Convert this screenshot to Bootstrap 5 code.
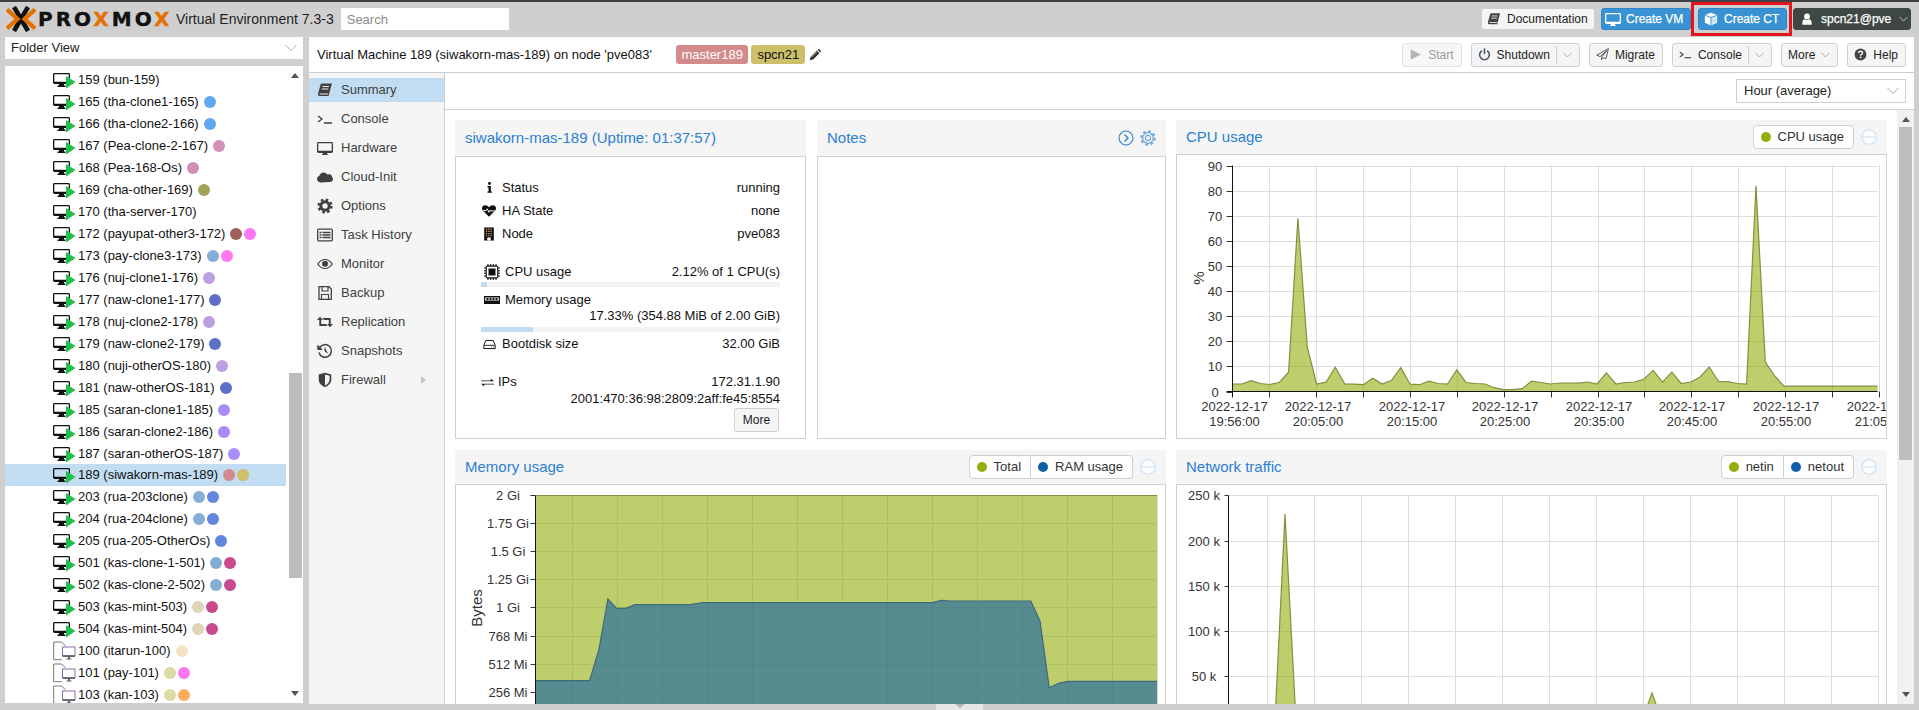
<!DOCTYPE html>
<html lang="en">
<head>
    <meta charset="UTF-8">
    <meta name="viewport" content="width=device-width, initial-scale=1.0">
    <title>pve083 - Proxmox Virtual Environment</title>
    <link href="https://cdn.jsdelivr.net/npm/bootstrap@5.3.0/dist/css/bootstrap.min.css" rel="stylesheet">
    <style>
        html, body { height: 100%; }
        body {
            background-color: #cfcfcf;
            font-family: "Liberation Sans", Arial, sans-serif;
            font-size: 13px;
            color: #111;
            overflow: hidden;
        }
        svg.ico { width: 16px; height: 16px; flex: none; display: block; }

        /* top bar */
        .topbar { height: 36px; border-top: 2px solid #3d4147; padding-left: 6px; padding-right: 8px; }
        .logo-mark { width: 30px; height: 26px; flex: none; }
        .logo-word {
            font-family: "DejaVu Sans", sans-serif;
            font-weight: 700;
            font-size: 20px;
            letter-spacing: 3px;
            color: #111;
            margin-left: 2px;
            width: 138px;
            white-space: nowrap;
            -webkit-text-stroke: .4px #111;
        }
        .logo-word b { color: #e57000; -webkit-text-stroke: .4px #e57000; font-weight: 700; }
        .version { font-size: 14px; color: #222; white-space: nowrap; }
        .search { width: 168px; height: 22px; margin-left: 7px; border: 0; border-radius: 0; padding: 0 6px; font-size: 13px; }
        .search::placeholder { color: #8a8a8a; }

        .btn-x {
            display: flex;
            align-items: center;
            height: 24px;
            padding: 0 7px 0 6px;
            gap: 6px;
            font-size: 12px;
            line-height: 1;
            color: #222;
            background: #f5f5f5;
            border: 1px solid #cfcfcf;
            border-radius: 3px;
            white-space: nowrap;
        }
        .btn-x .sep { width: 1px; height: 18px; background: #cfcfcf; }
        .btn-x svg.chev { width: 9px; height: 6px; flex: none; }
        .btn-x.is-off { color: #9a9a9a; border-color: #e2e2e2; background: #f7f7f7; }
        .btn-top { height: 22px; }
        .btn-blue { background: #3892d4; border-color: #2f86c7; color: #fff; -webkit-text-stroke: .25px #fff; }
        .btn-dark-pve { background: #3e4744; border-color: #3e4744; color: #fff; -webkit-text-stroke: .25px #fff; }
        .btn-docs { width: 114px; padding-left: 5px; margin-right: 6px; }
        .btn-vm { width: 90px; padding-left: 3px; gap: 5px; margin-right: 7px; }
        .btn-ct { width: 89px; padding-left: 5px; margin-right: 6px; position: relative; }
        .btn-ct::after {
            content: "";
            position: absolute;
            top: -7px;
            bottom: -7px;
            left: -8px;
            right: -6px;
            border: 3px solid #e2151f;
            pointer-events: none;
        }
        .btn-user { width: 118px; padding-left: 7px; padding-right: 4px; gap: 8px; }

        /* left column */
        .workspace { height: 668px; padding-top: 1px; }
        .left-col { width: 298px; margin-left: 5px; margin-right: 6px; flex: none; }
        .form-select.view-select, .form-select.range-select {
            background-image: url("data:image/svg+xml,%3csvg xmlns='http://www.w3.org/2000/svg' viewBox='0 0 12 8'%3e%3cpath fill='none' stroke='%23aaa' stroke-width='1' d='M.5 1L6 6.500 11.500 1'/%3e%3c/svg%3e");
        }
        .view-select {
            height: 22px;
            padding: 0 0 0 6px;
            border: 0;
            border-radius: 0;
            font-size: 13px;
            background-size: 12px 8px;
            background-position: right 6px center;
            color: #222;
        }
        .tree { height: 637px; margin-top: 7px; background: #fff; overflow: hidden; }
        .tree-list { width: 281px; padding-top: 3px; flex: none; border-radius: 0; }
        .tree-row {
            display: flex;
            align-items: center;
            height: 22px;
            flex: none;
            padding: 0 0 0 48px;
            border: 0;
            border-radius: 0;
            font-size: 13px;
            color: #111;
            background: transparent;
            white-space: nowrap;
        }
        .tree-row.active { background: #c2ddf2; color: #111; margin-top: 0; }
        .tree-row svg { width: 23px; height: 20px; flex: none; margin-right: 2px; }
        .tag-dot { width: 12px; height: 12px; border-radius: 50%; flex: none; margin-left: 2px; }
        .tag-dot.first { margin-left: 5px; }
        .vbar { width: 16px; margin-left: 1px; flex: none; background: #fff; align-items: center; }
        .vbar .up { width: 0; height: 0; border: 4px solid transparent; border-top: 0; border-bottom: 5px solid #555; margin-top: 7px; }
        .vbar .dn { width: 0; height: 0; border: 4px solid transparent; border-bottom: 0; border-top: 5px solid #555; margin-top: auto; margin-bottom: 7px; }
        .vbar .thumb { width: 13px; background: #bdbdbd; }
        .tree .thumb { margin-top: 295px; height: 205px; margin-left: 1px; }

        /* right column */
        .right-col { width: 1605px; flex: none; background: #fff; }
        .title-bar { height: 36px; border-bottom: 1px solid #cfcfcf; padding: 0 8px; flex: none; }
        .tag-pill {
            font-size: 13px;
            font-weight: 400;
            height: 19px;
            line-height: 19px;
            padding: 0 5.5px;
            border-radius: 3px;
        }
        .tag-pill.wide { padding: 0 6px; margin-left: 3px; }
        .action-row { gap: 9px; }
        .tabs { width: 136px; flex: none; background: #f5f5f5; border-right: 1px solid #cfcfcf; padding-top: 5px; }
        .tab-link {
            display: flex;
            align-items: center;
            height: 24px;
            margin-bottom: 5px;
            padding: 0 0 0 8px;
            gap: 8px;
            font-size: 13px;
            color: #404040;
        }
        .tab-link.active { background: #c2ddf2; color: #404040; }
        .tab-link .more { margin-left: auto; margin-right: 18px; width: 0; height: 0; border: 4px solid transparent; border-right: 0; border-left: 5px solid #c4c4c4; }
        .range-bar { height: 37px; border-bottom: 1px solid #cfcfcf; padding-right: 8px; flex: none; }
        .range-select {
            width: 170px;
            height: 24px;
            padding: 0 0 0 7px;
            border: 1px solid #cfcfcf;
            border-radius: 0;
            font-size: 13px;
            background-size: 12px 8px;
            background-position: right 6px center;
            color: #222;
        }
        .scroll-host { height: 594px; overflow: hidden; }
        .scroll-area { width: 1452px; flex: none; padding: 10px 10px 0; overflow: hidden; }
        .main-bar { width: 17px; background: #f1f1f1; margin-left: 0; padding-top: 0; }
        .main-bar .thumb { margin-top: 5px; height: 333px; }
        .row-top { height: 319px; margin-bottom: 11px; flex: none; }
        .panel-row { gap: 10px; }
        .half { width: 711px; flex: none; }

        .panel { border: 0; border-radius: 0; background: transparent; }
        .panel > .card-header {
            height: 34px;
            flex: none;
            padding: 0 10px;
            background: #f5f5f5;
            border: 0;
            border-radius: 0;
            font-size: 15px;
            color: #2a80d2;
        }
        .panel.tall > .card-header { height: 36px; }
        .panel > .card-body { padding: 0; border: 1px solid #d0d0d0; background: #fff; overflow: hidden; flex: 1 1 auto; min-height: 0; }
        .panel.tall > .card-body { padding: 19px 25px 0; }
        .legend-btn {
            display: flex;
            align-items: center;
            height: 24px;
            padding: 0 9px 0 7px;
            gap: 7px;
            background: #fff;
            border: 1px solid #cfcfcf;
            color: #333;
            font-size: 13px;
        }
        .legend-btn i { width: 10px; height: 10px; border-radius: 50%; display: block; }
        .tool-circle { width: 16px; height: 16px; margin-left: 7px; flex: none; }

        /* status list */
        .st-row { display: flex; align-items: center; justify-content: space-between; }
        .st-name { display: flex; align-items: center; }
        .st-h23 { height: 23px; }
        .st-bar { height: 5px; background: #f3f3f3; border-radius: 0; }
        .st-bar .progress-bar { background: #c2ddf2; }
        .gap-tiny { margin-top: 4px; }
        .ico-slot { width: 21px; display: flex; justify-content: center; padding-right: 5px; flex: none; }
        .ico-wide { width: 24px; padding-left: 3px; padding-right: 5px; display: flex; flex: none; }
        .btn-more { height: 24px; width: 45px; justify-content: center; padding: 0; margin-top: 2px; margin-right: 1px; }

        .footer-strip { height: 6px; flex: none; }
        .split-handle { width: 47px; height: 6px; background: #e6e6e6; display: flex; justify-content: center; }
        .split-handle span { width: 0; height: 0; border: 5px solid transparent; border-bottom: 0; border-top: 4px solid #b4b4b4; }
        svg.chart { display: block; font-family: "Liberation Sans", Arial, sans-serif; font-size: 13px; }
    </style>
</head>
<body class="d-flex flex-column">

    <svg width="0" height="0" class="position-absolute">
        <defs>
            <symbol id="i-book" viewBox="0 0 16 16"><path d="M5 1.5h10l-.6 2-2.8 10.500H2.600C1.400 14 .7 13 1 11.700L3.600 2.600C3.800 1.900 4.300 1.500 5 1.500z" fill="currentColor"/><path d="M5.500 4.500h6.500M4.800 7h6.500M2.700 12h8.500" stroke="#fff" stroke-width=".9" fill="none"/></symbol>
            <symbol id="i-term" viewBox="0 0 16 16"><path d="M1 5l4 3-4 3M7 12h8" stroke="currentColor" stroke-width="1.300" fill="none"/></symbol>
            <symbol id="i-desktop" viewBox="0 0 16 16"><path fill-rule="evenodd" d="M1.500 2h13c.8 0 1.500.6 1.500 1.400v8.200c0 .8-.7 1.400-1.500 1.400H10c0 1 .5 1.300 1 1.500v.5H5v-.5c.5-.2 1-.5 1-1.500H1.500C.7 13 0 12.400 0 11.600V3.400C0 2.600.7 2 1.500 2zM1.300 3.300v7.400h13.400V3.300z" fill="currentColor"/></symbol>
            <symbol id="i-cloud" viewBox="0 0 16 16"><path d="M3.800 13.500C1.700 13.500 0 12 0 10.100c0-1.500 1-2.800 2.400-3.300C2.800 4.800 4.500 3.500 6.500 3.500c1.600 0 3 .8 3.700 2.100.5-.2 1-.3 1.500-.3 1.900 0 3.400 1.300 3.500 3 .5.400.8 1.100.8 2 0 1.500-1.400 2.700-3 2.700z" fill="currentColor"/></symbol>
            <symbol id="i-gear" viewBox="0 0 16 16"><circle cx="8" cy="8" r="4.200" fill="none" stroke="currentColor" stroke-width="3"/><circle cx="8" cy="8" r="6.300" fill="none" stroke="currentColor" stroke-width="2.600" stroke-dasharray="2.500 2.450"/></symbol>
            <symbol id="i-gear-line" viewBox="0 0 16 16"><circle cx="8" cy="8" r="2.600" fill="none" stroke="currentColor" stroke-width="1.100"/><circle cx="8" cy="8" r="5.300" fill="none" stroke="currentColor" stroke-width="1.200"/><circle cx="8" cy="8" r="6.800" fill="none" stroke="currentColor" stroke-width="2" stroke-dasharray="2.700 2.640"/></symbol>
            <symbol id="i-list" viewBox="0 0 16 16"><rect x=".7" y="2.200" width="14.600" height="11.600" rx="1.300" fill="none" stroke="currentColor" stroke-width="1.300"/><path d="M2.500 5.500h2M5.500 5.500h8M2.500 8h2M5.500 8h8M2.500 10.500h2M5.500 10.500h8" stroke="currentColor" stroke-width="1.400"/></symbol>
            <symbol id="i-eye" viewBox="0 0 16 16"><path d="M.8 8c1.900-3 4.300-4.500 7.200-4.500S13.300 5 15.200 8c-1.900 3-4.300 4.500-7.200 4.500S2.700 11 .8 8z" fill="none" stroke="currentColor" stroke-width="1.200"/><circle cx="8" cy="7.800" r="3" fill="currentColor"/></symbol>
            <symbol id="i-floppy" viewBox="0 0 16 16"><path d="M2 1.700h10l2.300 2.300v10.300H2z" fill="none" stroke="currentColor" stroke-width="1.300"/><path d="M5 2v4h6V2M4.500 14V9.500h7V14" fill="none" stroke="currentColor" stroke-width="1.200"/></symbol>
            <symbol id="i-retweet" viewBox="0 0 16 16"><path d="M0 6l3-3.200L6 6H4.200v4H9l1.600 2H3.300c-.6 0-1-.4-1-1V6zM16 10l-3 3.200L10 10h1.800V6H7L5.400 4h7.300c.6 0 1 .4 1 1v5z" fill="currentColor"/></symbol>
            <symbol id="i-history" viewBox="0 0 16 16"><path d="M2.500 5A6.300 6.300 0 1 1 2 9.500" fill="none" stroke="currentColor" stroke-width="1.500"/><path d="M.8 2.200v4.300h4.300zM8 4.500V8.300l2.600 1.600" fill="currentColor" stroke="currentColor" stroke-width=".9"/></symbol>
            <symbol id="i-shield" viewBox="0 0 16 16"><path fill-rule="evenodd" d="M8 .8l6.300 1.800v5.200c0 3.500-3 6-6.300 7.400-3.300-1.400-6.300-3.900-6.300-7.400V2.600zM8 2.500v11c2.500-1.200 4.600-3.200 4.600-5.700V3.800z" fill="currentColor"/></symbol>
            <symbol id="i-info" viewBox="0 0 16 16"><circle cx="8" cy="3" r="1.800" fill="currentColor"/><path d="M5.500 6.300h4.200v6.500h1.300v1.700H5.500v-1.700h1.300V8H5.500z" fill="currentColor"/></symbol>
            <symbol id="i-heart" viewBox="0 0 16 16"><path d="M8 14.500L1.700 8.200C.5 7 0 6 0 4.800 0 2.700 1.500 1.500 3.800 1.500c1.600 0 3 .9 4.200 2.300C9.200 2.400 10.600 1.500 12.200 1.500 14.500 1.500 16 2.700 16 4.800c0 1.200-.5 2.200-1.700 3.400z" fill="currentColor"/><path d="M1.500 7.500h3.300l1.200-2 2 4 1.300-2.500.8.900h4.400" fill="none" stroke="#fff" stroke-width="1.100"/></symbol>
            <symbol id="i-node" viewBox="0 0 16 16"><rect x="2.500" y=".5" width="11" height="15" fill="currentColor"/><path d="M4.500 2.500h7M4.500 5h7M4.500 7.500h7M4.500 10h7" stroke="#c49a63" stroke-width="1.300" stroke-dasharray="1.500 1"/><rect x="6" y="12" width="4" height="3.500" fill="#fff"/></symbol>
            <symbol id="i-cpu" viewBox="0 0 16 16"><rect x="2.200" y="2.200" width="11.600" height="11.600" rx="1" fill="none" stroke="currentColor" stroke-width="1.200"/><rect x="4.500" y="4.500" width="7" height="7" fill="currentColor"/><path d="M4 0v2M6.700 0v2M9.300 0v2M12 0v2M4 14v2M6.700 14v2M9.300 14v2M12 14v2M0 4h2M0 6.700h2M0 9.300h2M0 12h2M14 4h2M14 6.700h2M14 9.300h2M14 12h2" stroke="currentColor" stroke-width="1.100"/></symbol>
            <symbol id="i-mem" viewBox="0 0 16 16"><path fill-rule="evenodd" d="M0 4h16v8H0zM1.200 5.500v3h13.600v-3z" fill="currentColor"/><path d="M2.500 6h2v2h-2zM5.500 6h2v2h-2zM8.500 6h2v2h-2zM11.500 6h2v2h-2z" fill="currentColor"/></symbol>
            <symbol id="i-hdd" viewBox="0 0 16 16"><path d="M3.500 3h9l2.500 6v4H1V9z" fill="none" stroke="currentColor" stroke-width="1.200"/><path d="M1.500 9h13" stroke="currentColor" stroke-width="1.100"/><path d="M10 11h1.200M12.500 11h1" stroke="#b03060" stroke-width="1"/></symbol>
            <symbol id="i-swap" viewBox="0 0 16 16"><path d="M0 5.500h12V3l4 3.500h-1.500L0 6.500zM16 10.500H4V13L0 9.500h1.500L16 9.500z" fill="currentColor"/></symbol>
            <symbol id="i-power" viewBox="0 0 16 16"><path d="M4.800 3.400a6 6 0 1 0 6.400 0" fill="none" stroke="currentColor" stroke-width="2"/><path d="M8 .5v7" stroke="currentColor" stroke-width="2"/></symbol>
            <symbol id="i-plane" viewBox="0 0 16 16"><path d="M15.300 .8L.9 8.800l4.200 1.700 8-7.200-6.300 8.100v3l2.200-2.500 3.200 1.400z" fill="none" stroke="currentColor" stroke-width="1.200" stroke-linejoin="round"/></symbol>
            <symbol id="i-help" viewBox="0 0 16 16"><circle cx="8" cy="8" r="7.300" fill="currentColor"/><path d="M5.600 6.200C5.700 4.800 6.700 4 8 4s2.500.8 2.500 2.100c0 1.800-2.400 1.700-2.400 3.400" fill="none" stroke="#f5f5f5" stroke-width="1.700"/><rect x="7.100" y="10.600" width="2" height="1.900" fill="#f5f5f5"/></symbol>
            <symbol id="i-play" viewBox="0 0 16 16"><path d="M2 1.500L14.500 8 2 14.500z" fill="currentColor"/></symbol>
            <symbol id="i-user" viewBox="0 0 16 16"><circle cx="8" cy="4.500" r="3.800" fill="currentColor"/><path d="M1.800 15.500v-3c0-2.600 1.600-4 3.300-4.200 1.700 1.400 4.100 1.400 5.800 0 1.700.2 3.300 1.600 3.300 4.200v3z" fill="currentColor"/></symbol>
            <symbol id="i-cube" viewBox="0 0 16 16"><path d="M8 .8l7 2.700v8.800l-7 3-7-3V3.500z" fill="#fff"/><path d="M1.500 3.800L8 6.300l6.500-2.500M8 6.300v9" fill="none" stroke="#3892d4" stroke-width="1.100"/><path d="M8.500 7l5.800-2.300v7.100l-5.800 2.500z" fill="#3892d4" opacity=".25"/></symbol>
            <symbol id="i-pencil" viewBox="0 0 16 16"><path d="M1 15l1-4.500 8.500-8.500 3.500 3.500L5.500 14z" fill="currentColor"/><path d="M11.500 1l1-.7c.5-.3 1-.3 1.400.1l1.700 1.700c.4.4.4 1 0 1.400l-.7 1z" fill="currentColor"/><path d="M3 11l7.500-7.500" stroke="#fff" stroke-width=".8"/></symbol>
            <symbol id="i-vm" viewBox="0 0 23 20"><path fill-rule="evenodd" d="M1.500 3h14c.8 0 1.500.6 1.500 1.400v8.200c0 .8-.7 1.400-1.500 1.400H11v1.500h1.500V17h-8v-1.500H6V14H1.500C.7 14 0 13.400 0 12.600V4.400C0 3.600.7 3 1.500 3zM1.300 4.300v7.500h14.400V4.300z" fill="#111"/><path d="M13 6L22.500 12 13 18.500z" fill="#21bf4b"/></symbol>
            <symbol id="i-tpl" viewBox="0 0 23 20"><path d="M.7 18.700V1h8l3.800 4" fill="none" stroke="#777" stroke-width="1"/><path d="M.7 18.700h8" stroke="#777" stroke-width="1"/><rect x="9.500" y="6" width="12.500" height="8.500" fill="#fff" stroke="#8a6fb0" stroke-width="1"/><path d="M9.500 14.500H22V16H17v1.500h1.500v1h-5v-1H15V16H9.500z" fill="#666"/></symbol>
            <symbol id="i-chev" viewBox="0 0 9 6"><path d="M.5.8L4.500 5 8.500.8" fill="none" stroke="currentColor" stroke-width="1"/></symbol>
            <symbol id="i-minus" viewBox="0 0 16 16"><circle cx="8" cy="8" r="7.200" fill="#fbfdff" stroke="#c9e0f2" stroke-width="1.100"/><path d="M1.500 8h13" stroke="#c9e0f2" stroke-width="1"/></symbol>
        </defs>
    </svg>

    <header class="topbar d-flex align-items-center flex-none">
        <svg class="logo-mark" viewBox="0 0 30 26">
            <path d="M8 1l14 24M22 1L8 25" stroke="#111" stroke-width="4.600" fill="none"/>
            <path d="M1 3.500L11.500 13 1 22.500M29 3.500L18.500 13 29 22.500" stroke="#e57000" stroke-width="4.200" fill="none"/>
        </svg>
        <span class="logo-word">PRO<b>X</b>MO<b>X</b></span>
        <span class="version">Virtual Environment 7.3-3</span>
        <input class="form-control search" type="text" placeholder="Search">
        <div class="ms-auto d-flex align-items-center">
            <button class="btn-x btn-top btn-docs" type="button"><svg class="ico" style="width:14px;height:14px;color:#444"><use href="#i-book"/></svg>Documentation</button>
            <button class="btn-x btn-top btn-blue btn-vm" type="button"><svg class="ico"><use href="#i-desktop"/></svg>Create VM</button>
            <button class="btn-x btn-top btn-blue btn-ct" type="button"><svg class="ico" style="width:14px;height:14px"><use href="#i-cube"/></svg>Create CT</button>
            <button class="btn-x btn-top btn-dark-pve btn-user" type="button"><svg class="ico" style="width:12px;height:12px"><use href="#i-user"/></svg>spcn21@pve<svg class="chev ms-auto" style="color:#bbb"><use href="#i-chev"/></svg></button>
        </div>
    </header>

    <div class="workspace d-flex">
        <aside class="left-col d-flex flex-column">
            <select class="form-select view-select"><option>Folder View</option></select>
            <div class="tree d-flex">
                <div class="list-group list-group-flush tree-list" id="treeList"></div>
                <div class="vbar d-flex flex-column"><div class="up"></div><div class="thumb"></div><div class="dn"></div></div>
            </div>
        </aside>

        <main class="right-col d-flex flex-column">
            <div class="title-bar d-flex align-items-center">
                <span>Virtual Machine 189 (siwakorn-mas-189) on node 'pve083'</span>
                <span class="badge tag-pill ms-4" style="background:#d28a8a;color:#fff">master189</span>
                <span class="badge tag-pill wide" style="background:#cdc06a;color:#111">spcn21</span>
                <svg class="ico ms-1" style="width:12px;height:12px;color:#333"><use href="#i-pencil"/></svg>
                <div class="ms-auto d-flex action-row" id="actions"></div>
            </div>
            <div class="d-flex flex-grow-1">
                <nav class="tabs nav flex-column flex-nowrap" id="tabs"></nav>
                <section class="flex-grow-1 d-flex flex-column">
                    <div class="range-bar d-flex align-items-center justify-content-end">
                        <select class="form-select range-select"><option>Hour (average)</option></select>
                    </div>
                    <div class="scroll-host d-flex">
                        <div class="scroll-area">
                            <div class="row-top d-flex panel-row">
                                <div class="half d-flex" style="gap:11px">
                                    <div class="card panel tall" style="width:351px">
                                        <div class="card-header d-flex align-items-center">siwakorn-mas-189 (Uptime: 01:37:57)</div>
                                        <div class="card-body">
                                            <div class="st-row st-h23"><span class="st-name"><span class="ico-slot"><svg class="ico" style="width:13px;height:13px"><use href="#i-info"/></svg></span>Status</span><span>running</span></div>
                                            <div class="st-row st-h23"><span class="st-name"><span class="ico-slot"><svg class="ico" style="width:14px;height:14px"><use href="#i-heart"/></svg></span>HA State</span><span>none</span></div>
                                            <div class="st-row st-h23"><span class="st-name"><span class="ico-slot"><svg class="ico" style="width:14px;height:14px"><use href="#i-node"/></svg></span>Node</span><span>pve083</span></div>

                                            <div class="st-row" style="height:21px;margin-top:16px"><span class="st-name"><span class="ico-wide"><svg class="ico"><use href="#i-cpu"/></svg></span>CPU usage</span><span>2.12% of 1 CPU(s)</span></div>
                                            <div class="progress st-bar"><div class="progress-bar" style="width:2.12%"></div></div>

                                            <div class="st-row" style="height:18px;margin-top:4px"><span class="st-name"><span class="ico-wide"><svg class="ico"><use href="#i-mem"/></svg></span>Memory usage</span></div>
                                            <div class="st-row justify-content-end" style="height:14px"><span>17.33% (354.88 MiB of 2.00 GiB)</span></div>
                                            <div class="progress st-bar gap-tiny"><div class="progress-bar" style="width:17.33%"></div></div>

                                            <div class="st-row" style="height:20px;margin-top:2px"><span class="st-name"><span class="ico-slot"><svg class="ico" style="width:13px;height:13px"><use href="#i-hdd"/></svg></span>Bootdisk size</span><span>32.00 GiB</span></div>

                                            <div class="st-row" style="height:20px;margin-top:18px"><span class="st-name"><svg class="ico me-1" style="width:13px;height:13px"><use href="#i-swap"/></svg>IPs</span><span>172.31.1.90</span></div>
                                            <div class="st-row justify-content-end" style="height:14px"><span>2001:470:36:98:2809:2aff:fe45:8554</span></div>
                                            <div class="d-flex justify-content-end"><button class="btn-x btn-more" type="button">More</button></div>
                                        </div>
                                    </div>
                                    <div class="card panel tall" style="width:349px">
                                        <div class="card-header d-flex align-items-center">Notes
                                            <svg class="ms-auto" width="16" height="16" viewBox="0 0 16 16" style="margin-right:6px"><circle cx="8" cy="8" r="7" fill="none" stroke="#2a80d2" stroke-width="1.100"/><path d="M6.500 4.500L10 8l-3.500 3.500" fill="none" stroke="#2a80d2" stroke-width="1.400"/></svg>
                                            <svg width="16" height="16" viewBox="0 0 16 16" style="color:#6fa6d6"><use href="#i-gear-line"/></svg>
                                        </div>
                                        <div class="card-body"></div>
                                    </div>
                                </div>
                                <div class="card panel half">
                                    <div class="card-header d-flex align-items-center">CPU usage
                                        <div class="btn-group ms-auto"><span class="legend-btn rounded-1"><i style="background:#94ae0a"></i>CPU usage</span></div>
                                        <svg class="tool-circle"><use href="#i-minus"/></svg>
                                    </div>
                                    <div class="card-body" id="cpuChart"></div>
                                </div>
                            </div>
                            <div class="d-flex panel-row" style="height:290px">
                                <div class="card panel half">
                                    <div class="card-header d-flex align-items-center">Memory usage
                                        <div class="btn-group ms-auto"><span class="legend-btn rounded-start-1"><i style="background:#94ae0a"></i>Total</span><span class="legend-btn rounded-end-1 border-start-0"><i style="background:#115fa6"></i>RAM usage</span></div>
                                        <svg class="tool-circle"><use href="#i-minus"/></svg>
                                    </div>
                                    <div class="card-body" id="memChart"></div>
                                </div>
                                <div class="card panel half">
                                    <div class="card-header d-flex align-items-center">Network traffic
                                        <div class="btn-group ms-auto"><span class="legend-btn rounded-start-1"><i style="background:#94ae0a"></i>netin</span><span class="legend-btn rounded-end-1 border-start-0"><i style="background:#115fa6"></i>netout</span></div>
                                        <svg class="tool-circle"><use href="#i-minus"/></svg>
                                    </div>
                                    <div class="card-body" id="netChart"></div>
                                </div>
                            </div>
                        </div>
                        <div class="vbar main-bar d-flex flex-column"><div class="up"></div><div class="thumb"></div><div class="dn"></div></div>
                    </div>
                </section>
            </div>
        </main>
    </div>

    <div class="footer-strip d-flex justify-content-center"><div class="split-handle"><span></span></div></div>

    <script>
        // tag colours as they are set on the cluster
        const C = { thaB: '#62a8f0', pea: '#d38fb6', cha: '#a3a35c', pay: '#9e5f58', pink: '#ff77f0', lb: '#84aed4',
            nuj: '#bb9fe0', naw: '#5f6fc8', sar: '#a98cf8', mas: '#d28a8a', sp: '#cdc06a', rua: '#6087dd', kas: '#c94a8c',
            sand: '#dcd5b8', ita: '#f6e3c6', kh: '#dcdaa5', or: '#ffaa5c' };

        const guests = [
            ['159 (bun-159)', []], ['165 (tha-clone1-165)', [C.thaB]], ['166 (tha-clone2-166)', [C.thaB]],
            ['167 (Pea-clone-2-167)', [C.pea]], ['168 (Pea-168-Os)', [C.pea]], ['169 (cha-other-169)', [C.cha]],
            ['170 (tha-server-170)', []], ['172 (payupat-other3-172)', [C.pay, C.pink]], ['173 (pay-clone3-173)', [C.lb, C.pink]],
            ['176 (nuj-clone1-176)', [C.nuj]], ['177 (naw-clone1-177)', [C.naw]], ['178 (nuj-clone2-178)', [C.nuj]],
            ['179 (naw-clone2-179)', [C.naw]], ['180 (nuji-otherOS-180)', [C.nuj]], ['181 (naw-otherOS-181)', [C.naw]],
            ['185 (saran-clone1-185)', [C.sar]], ['186 (saran-clone2-186)', [C.sar]], ['187 (saran-otherOS-187)', [C.sar]],
            ['189 (siwakorn-mas-189)', [C.mas, C.sp]], ['203 (rua-203clone)', [C.lb, C.rua]], ['204 (rua-204clone)', [C.lb, C.rua]],
            ['205 (rua-205-OtherOs)', [C.rua]], ['501 (kas-clone-1-501)', [C.lb, C.kas]], ['502 (kas-clone-2-502)', [C.lb, C.kas]],
            ['503 (kas-mint-503)', [C.sand, C.kas]], ['504 (kas-mint-504)', [C.sand, C.kas]],
            ['100 (itarun-100)', [C.ita], 1], ['101 (pay-101)', [C.kh, C.pink], 1], ['103 (kan-103)', [C.kh, C.or], 1]
        ];

        document.getElementById('treeList').innerHTML = guests.map(g => {
            const dots = g[1].map((c, i) => `<span class="tag-dot ${i ? '' : 'first'}" style="background:${c}"></span>`).join('');
            const active = g[0].startsWith('189') ? ' active' : '';
            return `<div class="list-group-item tree-row${active}"><svg><use href="#${g[2] ? 'i-tpl' : 'i-vm'}"/></svg>${g[0]}${dots}</div>`;
        }).join('');

        const tabs = [['Summary', 'book'], ['Console', 'term'], ['Hardware', 'desktop'], ['Cloud-Init', 'cloud'], ['Options', 'gear'],
            ['Task History', 'list'], ['Monitor', 'eye'], ['Backup', 'floppy'], ['Replication', 'retweet'], ['Snapshots', 'history'], ['Firewall', 'shield']];
        document.getElementById('tabs').innerHTML = tabs.map((t, i) =>
            `<a class="nav-link tab-link${i ? '' : ' active'}" href="#"><svg class="ico"><use href="#i-${t[1]}"/></svg>${t[0]}${t[0] === 'Firewall' ? '<span class="more"></span>' : ''}</a>`).join('');

        const chev = '<svg class="chev" style="color:#aaa"><use href="#i-chev"/></svg>';
        const actions = [
            ['Start', 'play', 'is-off', '#b5b5b5', ''],
            ['Shutdown', 'power', '', '#4b5a6b', '<span class="sep"></span>' + chev],
            ['Migrate', 'plane', '', '#555', ''],
            ['Console', 'term', '', '#333', '<span class="sep"></span>' + chev],
            ['More', '', '', '', chev],
            ['Help', 'help', '', '#444', '']
        ];
        document.getElementById('actions').innerHTML = actions.map(a => {
            const icon = a[1] ? `<svg class="ico" style="width:13px;height:13px;color:${a[3]}"><use href="#i-${a[1]}"/></svg>` : '';
            return `<button class="btn-x ${a[2]}" type="button">${icon}${a[0]}${a[4]}</button>`;
        }).join('');

        // charts, drawn in page coordinates through the viewBox
        function hline(x1, x2, y, c) { return `<path d="M${x1} ${y}H${x2}" stroke="${c}"/>`; }
        function vline(x, y1, y2, c) { return `<path d="M${x} ${y1}V${y2}" stroke="${c}"/>`; }
        function label(x, y, s, extra) { return `<text x="${x}" y="${y}" fill="#333" text-anchor="middle" dominant-baseline="central" ${extra || ''}>${s}</text>`; }
        function area(pts, y0, fill, stroke) {
            const p = pts.map(q => q[0].toFixed(1) + ',' + q[1].toFixed(1)).join(' ');
            const first = pts[0][0].toFixed(1), last = pts[pts.length - 1][0].toFixed(1);
            return `<polygon points="${first},${y0} ${p} ${last},${y0}" fill="${fill}" fill-opacity=".6"/><polyline points="${p}" fill="none" stroke="${stroke}" stroke-width="1.200"/>`;
        }
        function svg(id, box) {
            return (inner) => {
                document.getElementById(id).innerHTML =
                    `<svg class="chart" width="${box[2]}" height="${box[3]}" viewBox="${box.join(' ')}">${inner}</svg>`;
            };
        }

        // CPU
        const cpu = [3,3,4.3,3.2,2.8,3.6,7.7,69,17.7,3,3.7,9.7,3,2.9,2.7,5.3,3,4.4,9.5,2.9,2.7,4.1,3.2,3,8.6,3.6,3.2,3,1.5,.7,.7,1.1,4.1,3.6,3,3.4,3.4,3.3,3.8,3,7.4,3,3.6,3.8,4.9,8.4,3.7,7.7,3.2,3.8,5.7,9.8,4,3.9,3.2,3,82,11.7,6.2,2.1];
        while (cpu.length < 70) cpu.push(2.1);
        const cx0 = 1232.5, cx1 = 1877.5, cy0 = 391.5, cyTop = 165.5;
        let g = '';
        for (let i = 1; i <= 14; i++) {
            const x = Math.round(cx0 + 36.9 + (i - 1) * 46.88) + .5;
            g += vline(x, cyTop, cy0, '#ddd') + vline(x, cy0, cy0 + 6, '#333');
        }
        for (let v = 0; v <= 90; v += 10) {
            const y = Math.round(cy0 - v * 2.51) + .5;
            if (v) g += hline(cx0, cx1, y, '#ddd');
            g += hline(cx0 - 6, cx0, y, '#333') + label(1215, y, v);
        }
        g += area(cpu.map((v, i) => [cx0 + i * (cx1 - cx0) / 69, cy0 - v * 2.51]), cy0, '#94ae0a', '#7d9240');
        g += vline(cx0, cyTop, cy0 + 6, '#111') + hline(cx0 - 6, cx1, cy0, '#111');
        [[1234.5, '19:56:00'], [1318, '20:05:00'], [1412, '20:15:00'], [1505, '20:25:00'], [1599, '20:35:00'], [1692, '20:45:00'], [1786, '20:55:00'], [1880, '21:05:00']].forEach(t => {
            g += label(t[0], 406, '2022-12-17') + label(t[0], 421, t[1]);
        });
        g += label(1198, 278, '%', 'font-size="15" transform="rotate(-90 1198 278)"');
        svg('cpuChart', [1177, 155, 709, 283])(g);

        // memory, clipped at the bottom of the scroller
        const mx = z => 450 + z / 2.178, my = z => 440 + z / 3;
        const ram = [[186,722],[304,722],[324,630],[344,477],[363,505],[383,505],[403,494],[522,494],[552,488],[1050,488],[1070,481],[1090,483],[1265,483],[1285,543],[1305,743],[1325,730],[1345,724],[1540,724]];
        const mTop = 495.5, mBot = 720, mL = 535.5, mR = 1157;
        g = '';
        for (let i = 0; i < 14; i++) { const x = Math.round(571.7 + i * 45) + .5; g += vline(x, mTop, mBot, '#ddd'); }
        ['2 Gi', '1.75 Gi', '1.5 Gi', '1.25 Gi', '1 Gi', '768 Mi', '512 Mi', '256 Mi'].forEach((s, i) => {
            const y = Math.round(495 + i * 28.1) + .5;
            g += hline(mL, mR, y, '#ddd') + hline(mL - 5, mL, y, '#333') + label(508, y, s);
        });
        g += area([[mL, mTop], [mR, mTop]], mBot, '#94ae0a', '#7d9240');
        g += area(ram.map(p => [mx(p[0]), my(p[1])]), mBot, '#115fa6', '#3d6b7c');
        g += vline(mL, mTop, mBot, '#111');
        g += label(476, 608, 'Bytes', 'font-size="15" transform="rotate(-90 476 608)"');
        svg('memChart', [456, 485, 709, 240])(g);

        // network
        const nL = 1228.5, nR = 1878, nBot = 721;
        g = '';
        for (let i = 0; i < 14; i++) { const x = Math.round(1266.5 + i * 47) + .5; g += vline(x, 495.5, nBot, '#ddd'); }
        ['250 k', '200 k', '150 k', '100 k', '50 k'].forEach((s, i) => {
            const y = Math.round(495.3 + i * 45.25) + .5;
            g += hline(nL, nR, y, '#ddd') + hline(nL - 4, nL, y, '#333') + label(1204, y, s);
        });
        g += area([[1275, 721], [1285, 514], [1296, 721]], nBot, '#94ae0a', '#7d9240');
        g += area([[1642, 721], [1652, 693], [1662, 721]], nBot, '#94ae0a', '#7d9240');
        g += vline(nL, 495.5, nBot, '#111');
        svg('netChart', [1177, 485, 709, 240])(g);
    </script>
    <script src="https://cdn.jsdelivr.net/npm/bootstrap@5.3.0/dist/js/bootstrap.bundle.min.js"></script>
</body>
</html>
